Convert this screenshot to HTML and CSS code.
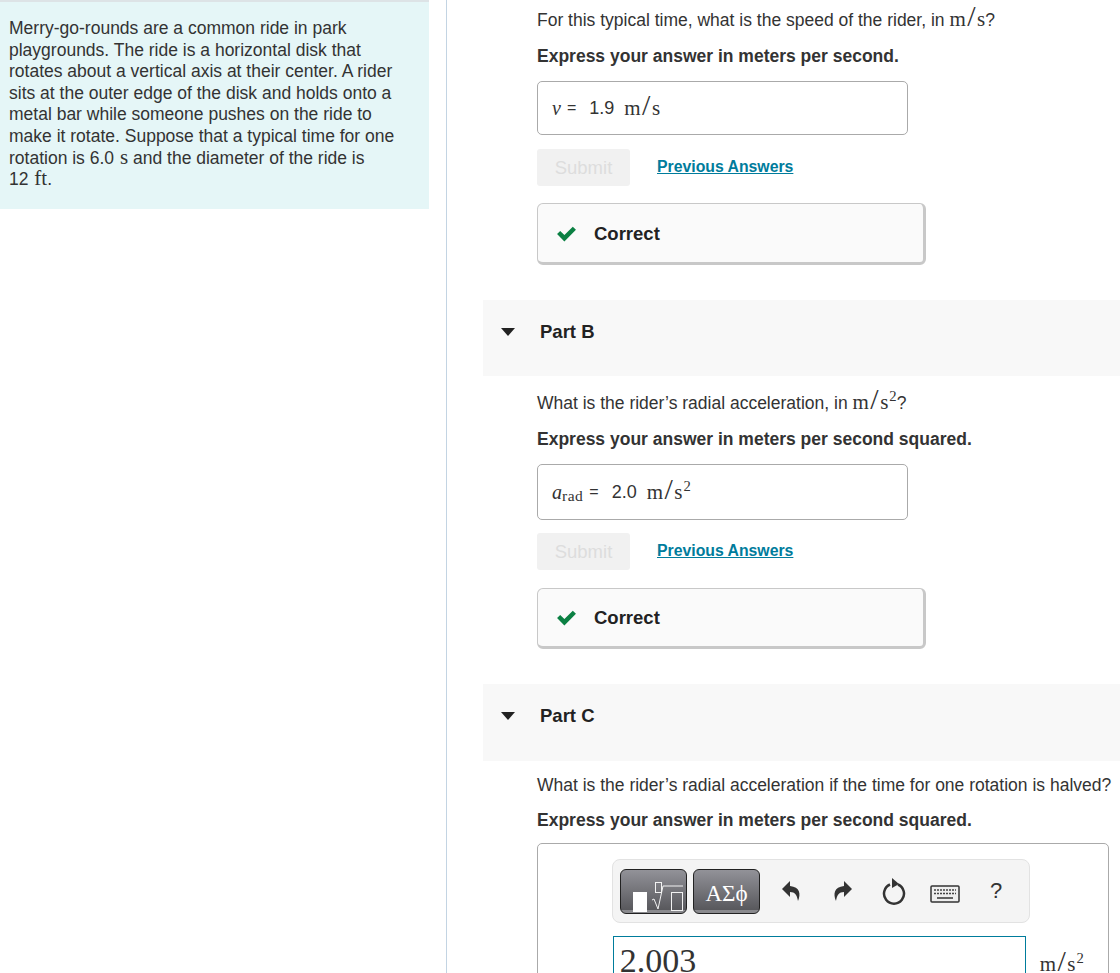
FILE: index.html

```html
<!DOCTYPE html>
<html lang="en">
<head>
    <meta charset="UTF-8">
    <title>Merry-go-round</title>
    <meta name="viewport" content="width=device-width, initial-scale=1">
    <link rel="stylesheet" href="styles.css">
</head>
<body>
<div class="page">
    <div class="intro-col">
        <div class="intro">
            Merry-go-rounds are a common ride in park playgrounds. The ride is a horizontal disk that rotates about a vertical axis at their center. A rider sits at the outer edge of the disk and holds onto a metal bar while someone pushes on the ride to make it rotate. Suppose that a typical time for one rotation is 6.0 <span class="math">s</span> and the diameter of the ride is<br>
            12 <span class="math">ft</span>.
        </div>
    </div>

    <div class="parts">
        <div class="part-body first">
            <p class="question">For this typical time, what is the speed of the rider, in <span class="math">m<span class="slash">/</span>s</span>?</p>
            <p class="instruction">Express your answer in meters per second.</p>
            <div class="answer tall">
                <i class="var">v</i><span class="eq">=</span><span class="value">1.9</span><span class="math unit">m<span class="slash">/</span>s</span>
            </div>
            <div class="actions">
                <span class="submit">Submit</span>
                <a class="prev" href="#">Previous Answers</a>
            </div>
            <div class="feedback">
                <svg class="check" width="21" height="17" viewBox="0 0 20 16"><path d="M1 8.500l3-3 4 4L16 1.500l3 3L8 15.500z" fill="#0b8043"/></svg>
                <span>Correct</span>
            </div>
        </div>

        <div class="part-head">
            <span class="caret"></span>
            <span class="part-title">Part B</span>
        </div>
        <div class="part-body">
            <p class="question">What is the rider’s radial acceleration, in <span class="math">m<span class="slash">/</span>s<sup>2</sup></span>?</p>
            <p class="instruction">Express your answer in meters per second squared.</p>
            <div class="answer">
                <i class="var">a<sub>rad</sub></i><span class="eq">=</span><span class="value">2.0</span><span class="math unit">m<span class="slash">/</span>s<sup>2</sup></span>
            </div>
            <div class="actions close">
                <span class="submit">Submit</span>
                <a class="prev" href="#">Previous Answers</a>
            </div>
            <div class="feedback short">
                <svg class="check" width="21" height="17" viewBox="0 0 20 16"><path d="M1 8.500l3-3 4 4L16 1.500l3 3L8 15.500z" fill="#0b8043"/></svg>
                <span>Correct</span>
            </div>
        </div>

        <div class="part-head tall">
            <span class="caret"></span>
            <span class="part-title">Part C</span>
        </div>
        <div class="part-body last">
            <p class="question">What is the rider’s radial acceleration if the time for one rotation is halved?</p>
            <p class="instruction">Express your answer in meters per second squared.</p>
            <div class="editor">
                <div class="toolbar">
                    <span class="tool-btn">
                        <svg width="65" height="43" viewBox="0 0 65 43">
                            <rect x="12" y="22" width="14" height="20" fill="#fff"/>
                            <g fill="none" stroke="#f2f2f2" stroke-width="1">
                                <rect x="34.500" y="12.500" width="6" height="10"/>
                                <path d="M31 30l2-1 4 10 5-23h20"/>
                                <rect x="50.500" y="22.500" width="11" height="18"/>
                            </g>
                        </svg>
                    </span>
                    <span class="tool-btn greek">ΑΣϕ</span>
                    <svg class="icon undo" width="21" height="24" viewBox="0 0 21 24"><path d="M9 2L1 10l8 8v-5c5 0 7 3 8 9 3-7 2-14-8-15z" fill="#333"/></svg>
                    <svg class="icon redo" width="21" height="24" viewBox="0 0 21 24"><path d="M12 2l8 8-8 8v-5c-5 0-7 3-8 9-3-7-2-14 8-15z" fill="#333"/></svg>
                    <svg class="icon reload" width="24" height="28" viewBox="0 0 24 28"><path d="M8 7.500a10 10 0 1 0 8 0" fill="none" stroke="#333" stroke-width="2.500"/><path d="M10 1l7 6-7 4z" fill="#333"/></svg>
                    <svg class="icon keys" width="30" height="18" viewBox="0 0 30 18">
                        <rect x="1" y="1" width="28" height="16" rx="1" fill="#eee" stroke="#333" stroke-width="1.500"/>
                        <path d="M4 5h22M4 8.500h22" stroke="#444" stroke-width="1.500" stroke-dasharray="2 1"/>
                        <path d="M7 13h16" stroke="#333" stroke-width="1.500"/>
                    </svg>
                    <span class="help">?</span>
                </div>
                <div class="entry">
                    <i class="var">a<sub>rad</sub></i><span class="eq">=</span>
                    <div class="entry-input">2.003</div>
                    <span class="math entry-unit">m<span class="slash">/</span>s<sup>2</sup></span>
                </div>
            </div>
        </div>
    </div>
</div>
</body>
</html>
```

FILE: styles.css

```css
html, body {
    margin: 0;
    height: 973px;
    overflow: hidden;
}
body {
    font-family: "Liberation Sans", Arial, sans-serif;
    font-size: 17.500px;
    color: #333;
    background: #fff;
}
.page {
    display: flex;
    height: 973px;
    overflow: hidden;
}
.intro-col {
    width: 446px;
    flex: none;
    border-right: 1px solid #c3d4e3;
}
.intro {
    width: 429px;
    height: 209px;
    box-sizing: border-box;
    padding: 16px 20px 0 9px;
    border-top: 2px solid #dde3e6;
    background: #e5f6f7;
    line-height: 21.600px;
}
.intro .math {
    line-height: 0;
    margin-left: 1px;
}
.math {
    font-family: "Liberation Serif", "DejaVu Serif", serif;
    font-size: 21px;
}
.slash {
    margin: 0 1.500px;
    font-size: 30px;
    font-weight: normal;
    line-height: 0;
}
.math sup {
    margin-left: 1px;
    font-size: 70%;
    line-height: 0;
}
.parts {
    flex: 1;
    min-width: 0;
    padding-left: 36px;
}
.part-head {
    display: flex;
    height: 76px;
    box-sizing: border-box;
    padding: 21px 0 0 18px;
    background: #f8f8f8;
    color: #222;
    font-size: 18.500px;
    font-weight: bold;
}
.part-head.tall {
    height: 77px;
}
.caret {
    width: 0;
    height: 0;
    margin: 7px 25px 0 0;
    border-left: 7.500px solid transparent;
    border-right: 7.500px solid transparent;
    border-top: 8px solid #222;
}
.part-title {
    line-height: 22px;
}
.part-body {
    padding: 14px 0 35px 54px;
}
.part-body.first {
    padding-top: 7px;
}
.part-body.last {
    padding-top: 12px;
}
.question {
    margin: 0;
    line-height: 24px;
    white-space: nowrap;
}
.instruction {
    margin: 12px 0 13px;
    font-weight: bold;
    line-height: 24px;
}
.last .instruction {
    margin: 11px 0;
}
.answer {
    display: flex;
    align-items: center;
    width: 371px;
    height: 56px;
    box-sizing: border-box;
    padding: 0 14px;
    border: 1px solid #aaa;
    border-radius: 5px;
}
.answer.tall {
    height: 54px;
}
.var {
    font-family: "Liberation Serif", "DejaVu Serif", serif;
    font-size: 20px;
}
.var sub {
    font-size: 15.500px;
    font-style: normal;
    letter-spacing: 0.500px;
    line-height: 0;
    vertical-align: -2px;
}
.eq {
    margin: 0 13px 0 6px;
    font-size: 16px;
}
.value {
    font-size: 18px;
}
.unit {
    margin-left: 10px;
}
.actions {
    display: flex;
    align-items: center;
    margin-top: 14px;
}
.actions.close {
    margin-top: 13px;
}
.submit {
    width: 93px;
    height: 37px;
    border-radius: 3px;
    background: #f1f1f1;
    color: #ddd;
    font-size: 18.500px;
    line-height: 37px;
    text-align: center;
}
.prev {
    margin: -2px 0 0 27px;
    color: #007c9c;
    font-size: 15.800px;
    font-weight: bold;
}
.feedback {
    display: flex;
    align-items: center;
    width: 389px;
    height: 62px;
    box-sizing: border-box;
    margin-top: 17px;
    padding: 1px 0 0 18px;
    border: 1px solid #c8c8c8;
    border-right: 3px solid #c8c8c8;
    border-bottom: 3px solid #c8c8c8;
    border-radius: 6px;
    background: #fafafa;
    color: #222;
    font-size: 18.500px;
    font-weight: bold;
}
.feedback.short {
    height: 61px;
    margin-top: 18px;
    padding-top: 0;
}
.check {
    margin-right: 17px;
}
.editor {
    width: 572px;
    height: 200px;
    box-sizing: border-box;
    padding: 15px 0 0 14px;
    border: 1px solid #aaa;
    border-radius: 5px;
}
.toolbar {
    display: flex;
    align-items: center;
    width: 418px;
    height: 64px;
    box-sizing: border-box;
    margin-left: 60px;
    padding-left: 7px;
    border: 1px solid #e2e2e2;
    border-radius: 8px;
    background: #f4f4f4;
}
.tool-btn {
    display: flex;
    align-items: center;
    justify-content: center;
    flex: none;
    width: 67px;
    height: 45px;
    box-sizing: border-box;
    border: 1px solid #222;
    border-radius: 6px;
    background: linear-gradient(#929298, #58585c 93%, #8a8a8e 93%);
}
.tool-btn:first-child {
    margin-right: 6px;
}
.greek {
    padding-top: 6px;
    color: #fff;
    font-family: "Liberation Serif", serif;
    font-size: 23px;
}
.undo {
    margin-left: 21px;
}
.redo {
    margin-left: 30px;
}
.reload {
    margin-left: 29px;
}
.keys {
    margin: 6px 0 0 24px;
}
.help {
    margin-left: 30px;
    font-size: 22px;
}
.entry {
    display: flex;
    align-items: center;
    margin-top: 13px;
}
.entry .var {
    margin-top: 14px;
}
.entry .eq {
    margin: 14px 0 0 5px;
}
.entry-input {
    width: 413px;
    height: 70px;
    box-sizing: border-box;
    margin-left: 15px;
    padding-left: 6px;
    border: 1px solid #007c9c;
    font-family: "Liberation Serif", serif;
    font-size: 34px;
    line-height: 48px;
}
.entry-unit {
    margin-left: 14px;
    align-self: flex-start;
    margin-top: 16px;
}
```
